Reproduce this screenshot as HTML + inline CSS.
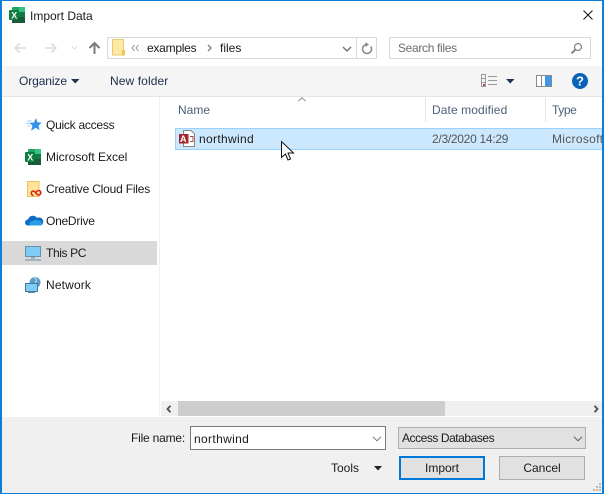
<!DOCTYPE html>
<html><head><meta charset="utf-8"><style>
html,body{margin:0;padding:0}
body{width:604px;height:494px;position:relative;overflow:hidden;background:#fff;font:12px "Liberation Sans",sans-serif;color:#1a1a1a}
.a{position:absolute}
.t{position:absolute;white-space:nowrap;line-height:16px}
svg{position:absolute;overflow:visible}
.btn{position:absolute;box-sizing:border-box;background:#e1e1e1;border:1px solid #adadad;text-align:center;line-height:20px}
</style></head><body>
<div class="a" style="left:0;top:66px;width:604px;height:30px;background:#f5f5f5"></div>
<div class="a" style="left:0;top:96px;width:604px;height:1px;background:#e5e5e5"></div>
<div class="a" style="left:159px;top:97px;width:1px;height:319px;background:#f0f0f0"></div>
<div class="a" style="left:2px;top:241px;width:155px;height:24px;background:#d9d9d9"></div>

<svg style="left:9px;top:7px" width="16" height="16" viewBox="0 0 16 16"><rect x="3" y="0" width="13" height="16" rx="1" fill="#21a366"/><rect x="10" y="0" width="6" height="5" fill="#33c481"/><rect x="10" y="5" width="6" height="5" fill="#107c41"/><rect x="3" y="10" width="13" height="6" fill="#185c37"/><rect x="0" y="3" width="10" height="10" rx="1" fill="#107c41"/><text x="2.200" y="11.500" font-size="9" font-weight="bold" fill="#fff" font-family="Liberation Sans">X</text></svg>
<div class="t" style="left:30px;top:8px">Import Data</div>
<svg style="left:583px;top:10px" width="10" height="10"><path d="M.5.500l9 9M9.500.5l-9 9" stroke="#111" fill="none"/></svg>

<svg style="left:14px;top:41px" width="90" height="14"><path d="M1 7h11M5.500 2.500L1 7l4.500 4.500" stroke="#dcdcdc" stroke-width="1.600" fill="none"/><path d="M31 7h11M37.500 2.500L42 7l-4.500 4.500" stroke="#dcdcdc" stroke-width="1.600" fill="none"/><path d="M58 5.500l2.500 2.500 2.500-2.500" stroke="#dcdcdc" fill="none"/><path d="M80.500 13V2M75.500 7l5-5 5 5" stroke="#7a7a7a" stroke-width="2" fill="none"/></svg>

<div class="a" style="left:107px;top:37px;width:268px;height:20px;border:1px solid #d9d9d9"></div>
<div class="a" style="left:356px;top:38px;width:1px;height:20px;background:#d9d9d9"></div>
<svg style="left:112px;top:39px" width="13" height="17"><rect x=".5" y=".5" width="11" height="15.500" fill="#ffe9a6" stroke="#e8cc72"/><rect x="10" y="11" width="3" height="5.500" fill="#ecc650"/></svg>
<svg style="left:131px;top:44px" width="9" height="8"><path d="M3.500 1L1 4l2.500 3M7.500 1L5 4l2.500 3" stroke="#999" fill="none"/></svg>
<div class="t" style="left:147px;top:40px;letter-spacing:-.25px">examples</div>
<svg style="left:207px;top:44px" width="6" height="8"><path d="M1 1l3 3-3 3" stroke="#888" stroke-width="1.500" fill="none"/></svg>
<div class="t" style="left:220px;top:40px">files</div>
<svg style="left:342px;top:46px" width="10" height="7"><path d="M1 1l4 4 4-4" stroke="#777" stroke-width="1.500" fill="none"/></svg>
<svg style="left:361px;top:42px" width="12" height="13"><path d="M9.800 4.500A4.500 4.500 0 1 1 5.500 2.500" stroke="#888" stroke-width="1.500" fill="none"/><path d="M4.500 0l3.500 2.500L4.500 5z" fill="#888"/></svg>

<div class="a" style="left:389px;top:37px;width:200px;height:20px;border:1px solid #d9d9d9"></div>
<div class="t" style="left:398px;top:40px;color:#6d6d6d;letter-spacing:-.33px">Search files</div>
<svg style="left:570px;top:42px" width="13" height="13"><circle cx="8" cy="5" r="3.500" stroke="#888" stroke-width="1.300" fill="none"/><path d="M5.500 7.500L1.500 11.500" stroke="#888" stroke-width="2" fill="none"/></svg>

<div class="t" style="left:19px;top:73px;color:#1c2b4a;letter-spacing:-.1px">Organize</div>
<svg style="left:71px;top:79px" width="9" height="5"><path d="M0 0h8.500L4.250 4.500z" fill="#1f3557"/></svg>
<div class="t" style="left:110px;top:73px;color:#1c2b4a;letter-spacing:.1px">New folder</div>
<svg style="left:481px;top:74px" width="17" height="14"><path d="M.5.500h4v12h-4zM.5 4.500h4M.5 8.500h4" stroke="#999" fill="none"/><path d="M7 2.500h9M7 6.500h9M7 10.500h9" stroke="#999" fill="none"/><rect x="2" y="10" width="2" height="2" fill="#c44"/></svg>
<svg style="left:506px;top:79px" width="9" height="5"><path d="M0 0h8.500L4.250 4.500z" fill="#1f3557"/></svg>
<svg style="left:536px;top:75px" width="16" height="12"><rect x=".5" y=".5" width="15" height="11" fill="#fff" stroke="#888"/><path d="M5.500 0v12" stroke="#888"/><rect x="9" y="1" width="6" height="10" fill="#3f96e8"/></svg>
<svg style="left:572px;top:73px" width="16" height="16"><circle cx="8" cy="8" r="8" fill="#0a62b8"/><text x="8" y="12.500" text-anchor="middle" font-size="13" font-weight="bold" fill="#fff" font-family="Liberation Sans">?</text></svg>

<svg style="left:298px;top:97px" width="9" height="5"><path d="M.5 4L4 .8 7.500 4" stroke="#888" fill="none"/></svg>
<div class="t" style="left:178px;top:102px;color:#4c607a">Name</div>
<div class="a" style="left:425px;top:97px;width:1px;height:25px;background:#e5e5e5"></div>
<div class="t" style="left:432px;top:102px;color:#4c607a;letter-spacing:.1px">Date modified</div>
<div class="a" style="left:545px;top:97px;width:1px;height:25px;background:#e5e5e5"></div>
<div class="t" style="left:552px;top:102px;color:#4c607a;letter-spacing:-.4px">Type</div>

<div class="a" style="left:175px;top:128px;width:429px;height:20px;background:#cce8ff;border:1px solid #99d1ff;border-right:0"></div>
<svg style="left:179px;top:130px" width="16" height="17"><path d="M4.500.5h7.500l3.500 3.500v12.500h-11z" fill="#fff" stroke="#888"/><rect x="0" y="4" width="9.500" height="9.500" fill="#a4262c"/><text x="1" y="12" font-size="9" font-weight="bold" fill="#fff" font-family="Liberation Sans">A</text><path d="M11 6.500h3v5h-3" stroke="#b8434a" fill="none"/></svg>
<div class="t" style="left:199px;top:131px;letter-spacing:.33px">northwind</div>
<div class="t" style="left:432px;top:131px;color:#555;letter-spacing:-.28px">2/3/2020 14:29</div>
<div class="t" style="left:552px;top:131px;color:#555;letter-spacing:.3px">Microsoft</div>
<svg style="left:281px;top:141px" width="13" height="21"><path d="M.5.500v16l4-3.500 2.500 6 2.500-1-2.500-6h5.500z" fill="#fff" stroke="#111"/></svg>

<svg style="left:26px;top:117px" width="16" height="16"><path d="M10 1l1.400 4.300 4.300.3-3.200 3 1 4.600-3.800-2.500-4.700 3 1.500-5-3-2.800 4.500-.4z" fill="#2f94e8"/><path d="M1 4h4.500M0 6.500h3.500M1.500 9h3" stroke="#9ccff5"/></svg>
<div class="t" style="left:46px;top:117px;letter-spacing:-.25px">Quick access</div>
<svg style="left:25px;top:149px" width="16" height="16"><rect x="3" y="0" width="13" height="16" rx="1" fill="#21a366"/><rect x="10" y="0" width="6" height="5" fill="#33c481"/><rect x="10" y="5" width="6" height="5" fill="#107c41"/><rect x="3" y="10" width="13" height="6" fill="#185c37"/><rect x="0" y="3" width="10" height="10" rx="1" fill="#107c41"/><text x="2.200" y="11.500" font-size="9" font-weight="bold" fill="#fff" font-family="Liberation Sans">X</text></svg>
<div class="t" style="left:46px;top:149px">Microsoft Excel</div>
<svg style="left:27px;top:181px" width="15" height="16"><rect x=".5" y=".5" width="11.500" height="15" fill="#ffe49a" stroke="#e8c35c"/><path d="M6.500 14.500c-3-.3-2.800-4.500 0-4.500 2 0 2.500 4 5 4 3 0 3-4.500 .3-4.500-2 0-2.800 1.500-3.500 3" stroke="#d8261c" stroke-width="1.600" fill="none"/></svg>
<div class="t" style="left:46px;top:181px;letter-spacing:-.2px">Creative Cloud Files</div>
<svg style="left:25px;top:215px" width="16" height="11"><path d="M3 10.500a3 3 0 0 1 0-6 5 5 0 0 1 9-1.500 4 4 0 0 1 4 7.500z" fill="#0f6cc4"/><path d="M5 10.500h11a3 3 0 0 0-3-5 4 4 0 0 0-5 .5 3 3 0 0 0-3 4.500z" fill="#2a9fe6"/></svg>
<div class="t" style="left:46px;top:213px;letter-spacing:-.25px">OneDrive</div>
<svg style="left:25px;top:246px" width="16" height="15"><rect x=".5" y=".5" width="15" height="10" fill="#7ecbf5" stroke="#6e8ea6"/><path d="M6 11h4v1.500H6z" fill="#8aa"/><path d="M0 14h16" stroke="#8aa6b8" stroke-width="1.500"/></svg>
<div class="t" style="left:46px;top:245px;letter-spacing:-.38px">This PC</div>
<svg style="left:25px;top:277px" width="16" height="16"><circle cx="10" cy="5.500" r="5.500" fill="#5a9dc8"/><path d="M9 .5c3 1 3 4 1 5" stroke="#cfe6f5" fill="none"/><rect x=".5" y="6.500" width="12" height="8" fill="#7fcdf5" stroke="#3f7ba3"/><path d="M3 15.500h7M6.500 14.500v1" stroke="#5d87a3"/></svg>
<div class="t" style="left:46px;top:277px;letter-spacing:.15px">Network</div>

<div class="a" style="left:161px;top:401px;width:443px;height:15px;background:#f0f0f0"></div>
<div class="a" style="left:178px;top:401px;width:267px;height:15px;background:#cdcdcd"></div>
<svg style="left:166px;top:405px" width="6" height="8"><path d="M4.500 .8L1.500 4l3 3.200" stroke="#505050" stroke-width="1.800" fill="none"/></svg>
<svg style="left:593px;top:405px" width="6" height="8"><path d="M1.500 .8L4.500 4l-3 3.200" stroke="#505050" stroke-width="1.800" fill="none"/></svg>

<div class="a" style="left:0;top:417px;width:604px;height:76px;background:#f0f0f0"></div>
<div class="t" style="left:131px;top:430px;letter-spacing:-.2px">File name:</div>
<div class="a" style="left:190px;top:426px;width:194px;height:22px;background:#fff;border:1px solid #7a7a7a"></div>
<div class="t" style="left:194px;top:431px;letter-spacing:.35px">northwind</div>
<svg style="left:372px;top:436px" width="10" height="6"><path d="M1 .8l4 4 4-4" stroke="#777" fill="none"/></svg>
<div class="a" style="left:398px;top:427px;width:186px;height:20px;background:#e1e1e1;border:1px solid #adadad"></div>
<div class="t" style="left:402px;top:430px;letter-spacing:-.45px">Access Databases</div>
<svg style="left:573px;top:436px" width="10" height="6"><path d="M1 .8l4 4 4-4" stroke="#555" fill="none"/></svg>
<div class="t" style="left:331px;top:460px">Tools</div>
<svg style="left:374px;top:466px" width="9" height="5"><path d="M0 0h8L4 4.500z" fill="#222"/></svg>
<div class="btn" style="left:399px;top:456px;width:86px;height:24px;border:2px solid #0078d7">Import</div>
<div class="btn" style="left:499px;top:456px;width:86px;height:24px;line-height:22px">Cancel</div>
<svg style="left:592px;top:482px" width="10" height="10"><path d="M7 1h2v2H7zM4 4h2v2H4zM7 4h2v2H7zM1 7h2v2H1zM4 7h2v2H4zM7 7h2v2H7z" fill="#bbb"/></svg>

<div class="a" style="left:0;top:0;width:604px;height:1px;background:#0f7ed6"></div>
<div class="a" style="left:0;top:0;width:2px;height:494px;background:#0f7ed6"></div>
<div class="a" style="left:602px;top:0;width:2px;height:494px;background:#0f7ed6"></div>
<div class="a" style="left:0;top:493px;width:604px;height:1px;background:#0f7ed6"></div>
</body></html>
